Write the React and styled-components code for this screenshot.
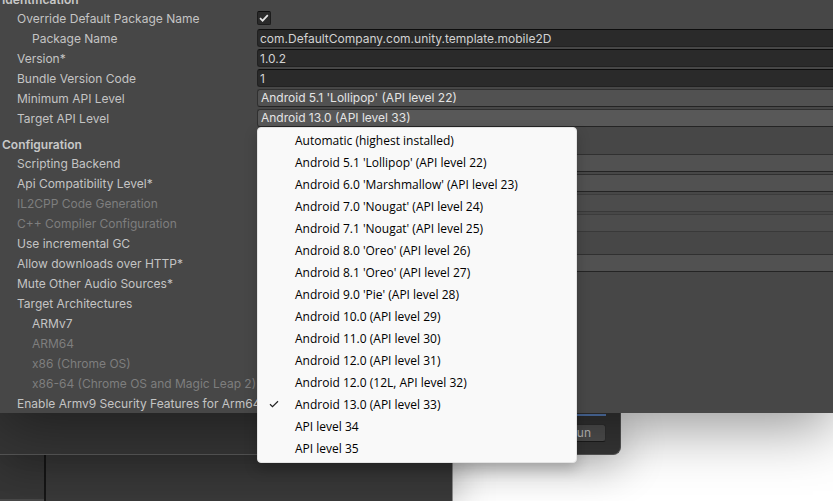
import React, { useState } from 'react';
import styled, { createGlobalStyle } from 'styled-components';

const API_LEVELS = [
  'Automatic (highest installed)',
  "Android 5.1 'Lollipop' (API level 22)",
  "Android 6.0 'Marshmallow' (API level 23)",
  "Android 7.0 'Nougat' (API level 24)",
  "Android 7.1 'Nougat' (API level 25)",
  "Android 8.0 'Oreo' (API level 26)",
  "Android 8.1 'Oreo' (API level 27)",
  "Android 9.0 'Pie' (API level 28)",
  'Android 10.0 (API level 29)',
  'Android 11.0 (API level 30)',
  'Android 12.0 (API level 31)',
  'Android 12.0 (12L, API level 32)',
  'Android 13.0 (API level 33)',
  'API level 34',
  'API level 35',
];

const CONFIGURATION = [
  { id: 'backend', label: 'Scripting Backend', type: 'select' },
  { id: 'compat', label: 'Api Compatibility Level*', type: 'select' },
  { id: 'il2cpp', label: 'IL2CPP Code Generation', type: 'select', disabled: true },
  { id: 'cpp', label: 'C++ Compiler Configuration', type: 'select', disabled: true },
  { id: 'gc', label: 'Use incremental GC', type: 'toggle' },
  { id: 'http', label: 'Allow downloads over HTTP*', type: 'select' },
  { id: 'mute', label: 'Mute Other Audio Sources*', type: 'toggle' },
  { id: 'arch', label: 'Target Architectures', type: 'none' },
  { id: 'armv7', label: 'ARMv7', type: 'toggle', indent: true },
  { id: 'arm64', label: 'ARM64', type: 'toggle', indent: true, disabled: true },
  { id: 'x86', label: 'x86 (Chrome OS)', type: 'toggle', indent: true, disabled: true },
  { id: 'x8664', label: 'x86-64 (Chrome OS and Magic Leap 2)', type: 'toggle', indent: true, disabled: true },
  { id: 'armv9', label: 'Enable Armv9 Security Features for Arm64', type: 'toggle' },
];

const App = () => {
  const [packageName, setPackageName] = useState('com.DefaultCompany.com.unity.template.mobile2D');
  const [version, setVersion] = useState('1.0.2');
  const [bundle, setBundle] = useState('1');
  const [minLevel, setMinLevel] = useState(API_LEVELS[1]);
  const [target, setTarget] = useState(API_LEVELS[12]);

  return (
    <Page>
      <GlobalStyle />
      <Inspector>
        <Scrolled>
          <SectionTitle>Identification</SectionTitle>
          <Rows>
            <Row>
              <Label htmlFor="override">Override Default Package Name</Label>
              <Toggle id="override" defaultChecked />
            </Row>
            <Row>
              <Label htmlFor="package" $indent>Package Name</Label>
              <TextField id="package" value={packageName} onChange={(e) => setPackageName(e.target.value)} />
            </Row>
            <Row>
              <Label htmlFor="version">Version*</Label>
              <TextField id="version" value={version} onChange={(e) => setVersion(e.target.value)} />
            </Row>
            <Row>
              <Label htmlFor="bundle">Bundle Version Code</Label>
              <TextField id="bundle" value={bundle} onChange={(e) => setBundle(e.target.value)} />
            </Row>
            <Row>
              <Label htmlFor="min">Minimum API Level</Label>
              <Dropdown id="min" value={minLevel} onChange={(e) => setMinLevel(e.target.value)}>
                {API_LEVELS.map((level) => <option key={level}>{level}</option>)}
              </Dropdown>
            </Row>
            <Row>
              <Label htmlFor="target">Target API Level</Label>
              <Anchor>
                <Dropdown id="target" $active value={target} onChange={(e) => setTarget(e.target.value)}>
                  {API_LEVELS.map((level) => <option key={level}>{level}</option>)}
                </Dropdown>
                <Menu>
                  {API_LEVELS.map((level) => (
                    <MenuItem key={level} type="button" onClick={() => setTarget(level)}>
                      <Mark>{level === target && <CheckIcon />}</Mark>
                      {level}
                    </MenuItem>
                  ))}
                </Menu>
              </Anchor>
            </Row>
          </Rows>
          <SectionTitle>Configuration</SectionTitle>
          <Rows>
            {CONFIGURATION.map((item) => (
              <Row key={item.id}>
                <Label
                  as={item.type === 'none' ? 'span' : 'label'}
                  htmlFor={item.type === 'none' ? undefined : item.id}
                  $indent={item.indent}
                  $disabled={item.disabled}
                >
                  {item.label}
                </Label>
                {item.type === 'select' && <Dropdown id={item.id} disabled={item.disabled} />}
                {item.type === 'toggle' && <Toggle id={item.id} disabled={item.disabled} />}
              </Row>
            ))}
          </Rows>
        </Scrolled>
      </Inspector>
      <Desktop>
        <BuildWindow>
          <Progress />
          <RunButton type="button">Build And Run</RunButton>
        </BuildWindow>
        <EditorWindow>
          <SidePane />
          <MainPane />
        </EditorWindow>
      </Desktop>
    </Page>
  );
};

const CheckIcon = () => (
  <svg width="10" height="8" viewBox="0 0 10 8" fill="none" stroke="#222" strokeWidth="1.2">
    <path d="M1 4.2 L3.5 6.6 L9 1.2" />
  </svg>
);

const Toggle = (props) => (
  <ToggleBox>
    <input type="checkbox" {...props} />
    <svg width="14" height="14" viewBox="0 0 14 14" fill="none" stroke="#e6e6e6" strokeWidth="1.7">
      <path d="M3 7.2 L5.6 9.7 L10.8 4.2" />
    </svg>
  </ToggleBox>
);

const GlobalStyle = createGlobalStyle`
  *, *::before, *::after {
    box-sizing: border-box;
  }

  body {
    margin: 0;
    background: #fff;
    font-family: Inter, sans-serif;
    font-size: 12px;
    overflow: hidden;
  }

  input, select, button {
    margin: 0;
    font: inherit;
  }
`;

const Page = styled.div`
  display: flex;
  flex-direction: column;
  min-height: 100vh;
`;

const Inspector = styled.main`
  position: relative;
  z-index: 2;
  padding-bottom: 1px;
  background: #474747;
  box-shadow: 0 14px 56px rgba(0, 0, 0, 0.42);
`;

/* the list is scrolled a little past its first heading */
const Scrolled = styled.div`
  display: flow-root;
  margin-top: -16px;
`;

const SectionTitle = styled.h2`
  margin: 0;
  padding: 6px 0 0 2px;
  color: #c8c8c8;
  font-size: 12px;
  font-weight: 600;
  line-height: 19px;

  * + & {
    padding-top: 8px;
  }
`;

const Rows = styled.div`
  display: grid;
  grid-auto-rows: 18px;
  row-gap: 2px;
`;

const Row = styled.div`
  display: grid;
  grid-template-rows: 18px;
  grid-template-columns: 257px minmax(0, 1fr);
`;

const Label = styled.label`
  padding-left: ${(props) => (props.$indent ? 32 : 17)}px;
  color: ${(props) => (props.$disabled ? '#7e7e7e' : '#c4c4c4')};
  line-height: 20px;
  white-space: nowrap;
`;

const TextField = styled.input`
  width: 100%;
  height: 18px;
  padding: 1px 2px 0;
  border: 1px solid #212121;
  border-top-color: #0d0d0d;
  border-right: 0;
  border-radius: 3px 0 0 3px;
  background: #2a2a2a;
  color: #d2d2d2;
  outline: none;
`;

const Dropdown = styled.select`
  appearance: none;
  display: block;
  width: 100%;
  height: 18px;
  padding: 0 3px;
  border: 1px solid ${(props) => (props.disabled ? '#3c3c3c' : '#303030')};
  border-bottom-color: ${(props) => (props.disabled ? '#393939' : '#242424')};
  border-right: 0;
  border-radius: 3px 0 0 3px;
  background: ${(props) => (props.disabled ? '#4c4c4c' : props.$active ? '#585858' : '#515151')};
  color: #e4e4e4;
  line-height: 16px;
  outline: none;
  opacity: 1;
`;

const ToggleBox = styled.span`
  display: grid;
  align-self: center;
  width: 14px;
  height: 14px;

  input,
  svg {
    grid-area: 1 / 1;
  }

  input {
    appearance: none;
    width: 14px;
    height: 14px;
    border: 1px solid #1c1c1c;
    border-top-color: #0d0d0d;
    border-radius: 2px;
    background: #2a2a2a;
  }

  svg {
    visibility: hidden;
    pointer-events: none;
  }

  input:checked + svg {
    visibility: visible;
  }
`;

const Anchor = styled.div`
  position: relative;
`;

const Menu = styled.div`
  position: absolute;
  z-index: 5;
  top: 100%;
  left: 0;
  width: 320px;
  padding: 1px 0 3px;
  border: 1px solid #e4e4e4;
  border-radius: 4px;
  background: #f9f9f9;
  box-shadow: 0 6px 14px rgba(0, 0, 0, 0.2);
`;

const MenuItem = styled.button`
  display: flex;
  align-items: center;
  width: 100%;
  height: 22px;
  padding: 0;
  border: 0;
  background: none;
  color: #000;
  font-family: 'Open Sans', 'Noto Sans', sans-serif;
  font-size: 12px;
  white-space: nowrap;
  text-align: left;

  &:hover {
    background: #ececec;
  }
`;

const Mark = styled.span`
  display: flex;
  width: 37px;
  padding-left: 11px;
`;

const Desktop = styled.div`
  display: flex;
  flex: 1;
  flex-direction: column;
  align-items: flex-start;
  background: #fff;
`;

const BuildWindow = styled.section`
  position: relative;
  z-index: 1;
  display: flex;
  flex-direction: column;
  align-items: flex-end;
  width: 621px;
  height: 42px;
  padding: 1px 14px 0 0;
  border: 1px solid #555;
  border-width: 0 1px 1px 0;
  border-radius: 0 0 8px 0;
  background: #353535;
  box-shadow: 0 10px 44px rgba(0, 0, 0, 0.32);
`;

const Progress = styled.div`
  width: 100%;
  height: 2px;
  background: #5a80bc;
  clip-path: inset(0 0 0 50%);
`;

const RunButton = styled.button`
  height: 18px;
  margin-top: 8px;
  padding: 0 14px;
  border: 1px solid #303030;
  border-bottom-color: #1c1c1c;
  border-radius: 3px;
  background: #505050;
  color: #cacaca;
  line-height: 16px;
`;

const EditorWindow = styled.section`
  display: flex;
  flex: 1;
  width: 453px;
  border-right: 1px solid #8c8c8c;
  background: #161616;
  box-shadow: 0 0 40px rgba(0, 0, 0, 0.36);
`;

const SidePane = styled.div`
  width: 44px;
  border-bottom: 2px solid #484848;
  background: #363636;
`;

const MainPane = styled.div`
  flex: 1;
  margin-left: 2px;
  background: #393939;
`;

export default App;
